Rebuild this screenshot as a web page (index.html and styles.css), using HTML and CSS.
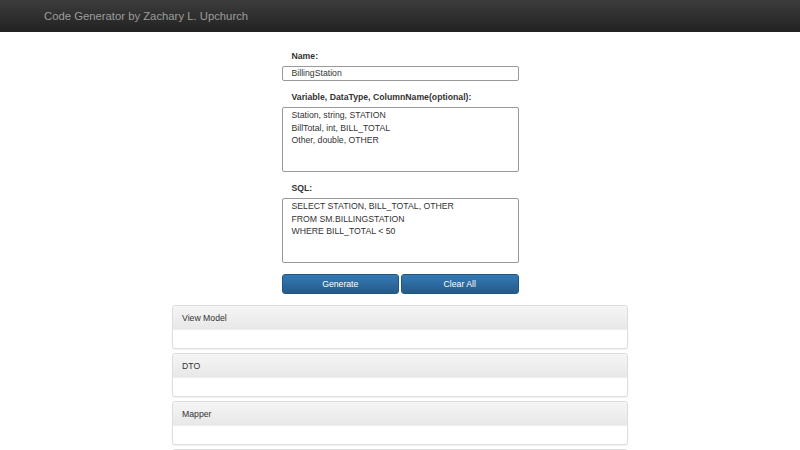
FILE: index.html
```html
<!DOCTYPE html>
<html>
<head>
<meta charset="utf-8">
<link rel="stylesheet" href="styles.css">
</head>
<body>
<nav class="navbar"><span class="brand">Code Generator by Zachary L. Upchurch</span></nav>
<main class="page">
  <form class="form">
    <label class="label">Name:</label>
    <div class="input">BillingStation</div>
    <label class="label">Variable, DataType, ColumnName(optional):</label>
    <div class="textarea">Station, string, STATION<br>BillTotal, int, BILL_TOTAL<br>Other, double, OTHER</div>
    <label class="label">SQL:</label>
    <div class="textarea">SELECT STATION, BILL_TOTAL, OTHER<br>FROM SM.BILLINGSTATION<br>WHERE BILL_TOTAL &lt; 50</div>
    <div class="buttons">
      <button type="button" class="btn">Generate</button>
      <button type="button" class="btn">Clear All</button>
    </div>
  </form>
  <section class="panels">
    <div class="panel"><div class="panel-heading">View Model</div><div class="panel-body"></div></div>
    <div class="panel"><div class="panel-heading">DTO</div><div class="panel-body"></div></div>
    <div class="panel"><div class="panel-heading">Mapper</div><div class="panel-body"></div></div>
    <div class="panel"><div class="panel-heading"></div><div class="panel-body"></div></div>
  </section>
</main>
</body>
</html>
```
FILE: styles.css
```css
html, body { margin: 0; padding: 0; background: #fff; }
body {
  font-family: "Liberation Sans", Arial, sans-serif;
  font-size: 8.7px;
  color: #333;
  height: 450px;
  overflow: hidden;
}
.navbar {
  height: 32px;
  background: linear-gradient(to bottom, #3c3c3c 0%, #222 100%);
  display: flex;
  align-items: center;
  padding-left: 44px;
}
.brand { color: #9d9d9d; font-size: 11.3px; }
.page { display: flex; flex-direction: column; align-items: center; }
.form { width: 237px; display: flex; flex-direction: column; padding-top: 18px; }
.label {
  font-weight: bold;
  font-size: 8.7px;
  padding-left: 10px;
  line-height: 12px;
  margin-bottom: 4px;
}
.input {
  height: 15px;
  border: 1px solid #999;
  border-radius: 2px;
  box-sizing: border-box;
  padding: 0 9px;
  line-height: 13px;
  margin-bottom: 10px;
}
.textarea {
  height: 65px;
  box-sizing: border-box;
  border: 1px solid #999;
  border-radius: 2px;
  padding: 1px 9px;
  line-height: 12.5px;
  margin-bottom: 10px;
}
.buttons { display: flex; gap: 2px; margin-top: 1px; }
.btn {
  flex: 1;
  height: 20px;
  border: 1px solid #245580;
  border-radius: 3px;
  background: linear-gradient(to bottom, #337ab7 0%, #265a88 100%);
  color: #fff;
  font-family: "Liberation Sans", Arial, sans-serif;
  font-size: 8.7px;
  padding: 0;
}
.panels { width: 456px; margin-top: 11px; display: flex; flex-direction: column; gap: 4px; }
.panel {
  border: 1px solid #ddd;
  border-radius: 3px;
  box-shadow: 0 1px 2px rgba(0,0,0,0.05);
  background: #fff;
}
.panel-heading {
  height: 24px;
  box-sizing: border-box;
  padding: 0 9px;
  display: flex;
  align-items: center;
  background: linear-gradient(to bottom, #f5f5f5 0%, #e8e8e8 100%);
  border-bottom: 1px solid #eee;
  border-radius: 2px 2px 0 0;
  color: #333;
  font-size: 8.7px;
}
.panel-body { height: 18px; }
```
